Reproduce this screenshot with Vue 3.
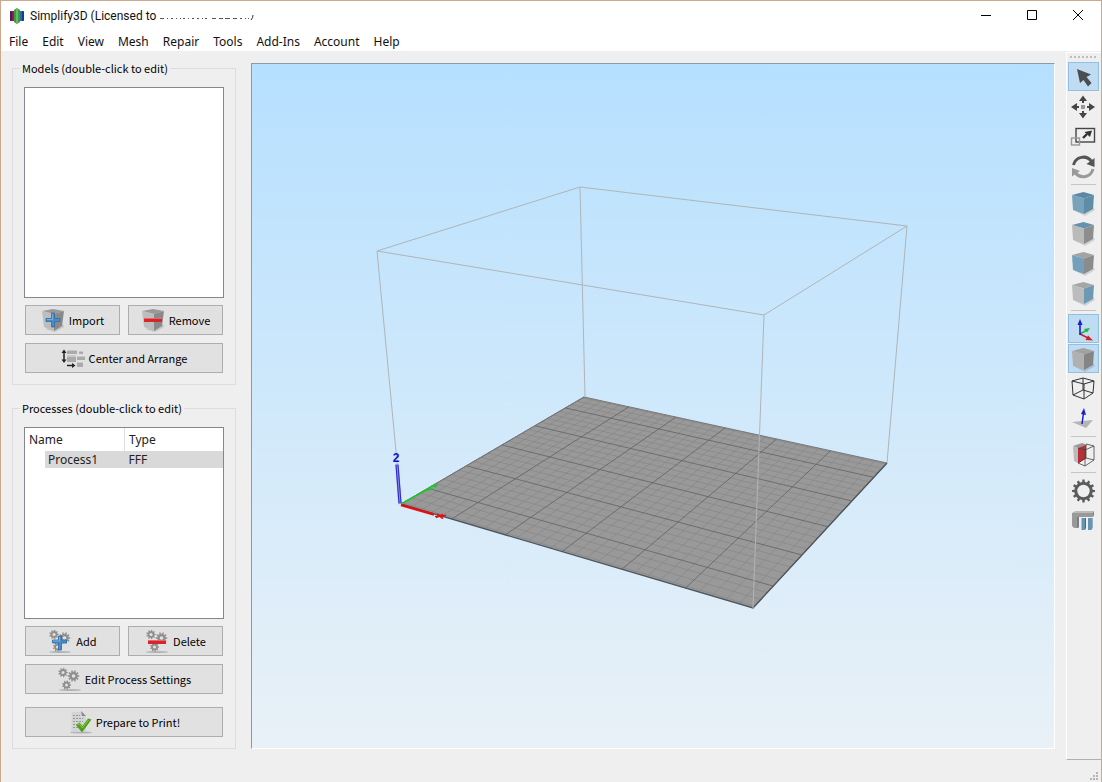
<script setup>
import { ref } from 'vue'

const menus = ['File', 'Edit', 'View', 'Mesh', 'Repair', 'Tools', 'Add-Ins', 'Account', 'Help']

const toolGroups = [
  [
    { id: 'select', label: 'Select', active: true },
    { id: 'move', label: 'Move' },
    { id: 'scale', label: 'Scale' },
    { id: 'rotate', label: 'Rotate' },
  ],
  [
    { id: 'view-default', label: 'Default view', cube: ['#5b89a3', '#78a3bb', '#5f8ca6'] },
    { id: 'view-top', label: 'Top view', cube: ['#6593ae', '#bababa', '#8d8d8d'] },
    { id: 'view-front', label: 'Front view', cube: ['#a3a3a3', '#74a0bb', '#8b8b8b'] },
    { id: 'view-side', label: 'Side view', cube: ['#a6a6a6', '#bcbcbc', '#6c9ab5'] },
  ],
  [
    { id: 'axes', label: 'Show axes', active: true },
    { id: 'solid', label: 'Solid model', active: true, cube: ['#a2a2a2', '#b0b0b0', '#858585'] },
    { id: 'wire', label: 'Wireframe' },
    { id: 'normals', label: 'Show normals' },
  ],
  [{ id: 'section', label: 'Cross section' }],
  [
    { id: 'settings', label: 'Machine settings' },
    { id: 'supports', label: 'Supports' },
  ],
]

const processes = ref([{ name: 'Process1', type: 'FFF' }])

// Outline of a gear wheel with a round hole (use with fill-rule evenodd)
function gear(cx, cy, outer, root, hole, teeth) {
  const pts = []
  const step = (Math.PI * 2) / teeth
  for (let i = 0; i < teeth; i++) {
    const a = i * step
    const shape = [[-0.28, root], [-0.18, outer], [0.18, outer], [0.28, root]]
    for (const [k, r] of shape) {
      pts.push(`${(cx + r * Math.cos(a + k * step)).toFixed(2)} ${(cy + r * Math.sin(a + k * step)).toFixed(2)}`)
    }
  }
  return `M${pts.join('L')}Z M${cx - hole} ${cy}a${hole} ${hole} 0 1 0 ${hole * 2} 0a${hole} ${hole} 0 1 0 ${-hole * 2} 0Z`
}
const smallGears = gear(6, 5.5, 4.8, 3.5, 1.6, 9) + gear(16.5, 9, 5.8, 4.2, 1.8, 10) + gear(9.5, 18, 4.6, 3.4, 1.5, 9)
const bigGear = gear(15.5, 15, 11.5, 9.2, 6.2, 12)

// Perspective mapping of the build plate (unit square) onto its drawn corners
const [p0, p1, p2, p3] = [[401, 504], [753, 608], [887, 463], [584, 397]]
function project(u, v) {
  const d1 = [p1[0] - p2[0], p1[1] - p2[1]]
  const d2 = [p3[0] - p2[0], p3[1] - p2[1]]
  const s = [p0[0] - p1[0] + p2[0] - p3[0], p0[1] - p1[1] + p2[1] - p3[1]]
  const det = d1[0] * d2[1] - d2[0] * d1[1]
  const g = (s[0] * d2[1] - d2[0] * s[1]) / det
  const h = (d1[0] * s[1] - s[0] * d1[1]) / det
  const w = g * u + h * v + 1
  return [0, 1]
    .map((i) => ((p1[i] - p0[i] + g * p1[i]) * u + (p3[i] - p0[i] + h * p3[i]) * v + p0[i]) / w)
    .map((n) => n.toFixed(2))
    .join(' ')
}
const bed = { x: 300, y: 265 }
function gridPath(major) {
  let d = ''
  const wanted = (n) => (n % 50 === 0) === major
  for (let x = -150; x <= 150; x += 10) {
    if (wanted(x)) d += `M${project(x / bed.x + 0.5, 0)}L${project(x / bed.x + 0.5, 1)}`
  }
  for (let y = -130; y <= 130; y += 10) {
    if (wanted(y)) d += `M${project(0, y / bed.y + 0.5)}L${project(1, y / bed.y + 0.5)}`
  }
  return d
}
const minorGrid = gridPath(false)
const majorGrid = gridPath(true)
</script>

<template>
  <div class="window">
    <header class="titlebar">
      <svg class="logo" viewBox="0 0 16 16" aria-hidden="true">
        <rect x="1" y="3" width="5" height="10" rx="1" fill="#8e1c6c" />
        <rect x="1" y="3" width="2" height="10" rx="1" fill="#5b1650" />
        <rect x="10" y="3" width="5" height="10" rx="1" fill="#1b6fb5" />
        <rect x="13" y="3" width="2" height="10" rx="1" fill="#173f7c" />
        <path d="M5 2L8 0L11 2V14L8 16L5 14Z" fill="#3f9a3c" />
        <path d="M7 1h2v14h-2z" fill="#6bb95a" />
      </svg>
      <h1 class="title">Simplify3D (Licensed to</h1>
      <svg class="masked" viewBox="0 0 94 10" aria-hidden="true">
        <path d="M0 7.500h4M7 7.500h1M11 7.500h2M16 7.500h1M20 7.500h1M23 7.500h2M28 7.500h1M32 7.500h2M37 7.500h2M42 7.500h1M45 7.500h2M52 7.500h4M59 7.500h4M65 7.500h5M73 7.500h4M80 7.500h2M85 7.500h1M88 7.500h1" stroke="#555" fill="none" />
        <path d="M93 4Q93 7 91 9" stroke="#333" fill="none" />
      </svg>
      <div class="controls">
        <button type="button" aria-label="Minimize"><svg viewBox="0 0 12 12"><path d="M1 5.500h10" /></svg></button>
        <button type="button" aria-label="Maximize"><svg viewBox="0 0 12 12"><path d="M1.500 .5h9v9h-9z" /></svg></button>
        <button type="button" aria-label="Close"><svg viewBox="0 0 12 12"><path d="M1 0L11 10M11 0L1 10" /></svg></button>
      </div>
    </header>

    <nav class="menubar" aria-label="Main menu">
      <button v-for="m in menus" :key="m" type="button">{{ m }}</button>
    </nav>

    <div class="body">
      <aside class="sidebar">
        <fieldset class="group">
          <legend>Models (double-click to edit)</legend>
          <div class="list models" role="listbox" aria-label="Models" tabindex="0"></div>
          <div class="buttons">
            <button type="button" class="push">
              <svg viewBox="0 0 24 24" aria-hidden="true">
                <path d="M4 21L14 24L23 19L22 16Z" fill="#000" opacity=".12" />
                <path d="M1 3L12 1L23 3L13 6Z" fill="#999" />
                <path d="M1 3L13 6V23L3 19Z" fill="#bdbdbd" />
                <path d="M13 6L23 3L21 18L13 23Z" fill="#8a8a8a" />
                <path d="M10.500 5h3v5.500h5.500v3h-5.500v5.500h-3v-5.500H5v-3h5.500Z" fill="#4a8cc8" stroke="#2d6ba5" stroke-width=".8" />
                <path d="M11.500 6v5.500H6" fill="none" stroke="#77afe0" />
              </svg>
              <span>Import</span>
            </button>
            <button type="button" class="push">
              <svg viewBox="0 0 24 24" aria-hidden="true">
                <path d="M4 21L14 24L23 19L22 16Z" fill="#000" opacity=".12" />
                <path d="M1 3L12 1L23 3L13 6Z" fill="#999" />
                <path d="M1 3L13 6V23L3 19Z" fill="#bdbdbd" />
                <path d="M13 6L23 3L21 18L13 23Z" fill="#8a8a8a" />
                <rect x="3" y="10" width="18" height="4" fill="#d6262b" />
                <path d="M3 10.500h18" stroke="#ef6468" />
              </svg>
              <span>Remove</span>
            </button>
            <button type="button" class="push wide">
              <svg viewBox="0 0 24 24" aria-hidden="true">
                <g fill="#aaa">
                  <rect x="6" y="4" width="10" height="4" />
                  <rect x="18" y="5" width="4" height="3" />
                  <rect x="6" y="9" width="9" height="7" />
                  <rect x="16" y="10" width="8" height="4" />
                  <rect x="16" y="16" width="6" height="5" />
                </g>
                <path d="M6 4h10v1H6zM18 5h4v1h-4zM6 9h9v2H6zM16 10h8v1h-8zM16 16h6v1h-6z" fill="#c9c9c9" />
                <path d="M3 6V14M6 19.500H12" stroke="#222" stroke-width="1.500" />
                <path d="M.5 7L3 3.500L5.500 7ZM.5 13.500L3 17L5.500 13.500ZM11 17L14.500 19.500L11 22Z" fill="#222" />
              </svg>
              <span>Center and Arrange</span>
            </button>
          </div>
        </fieldset>

        <fieldset class="group processes">
          <legend>Processes (double-click to edit)</legend>
          <div class="list">
            <table>
              <thead>
                <tr><th scope="col">Name</th><th scope="col">Type</th></tr>
              </thead>
              <tbody>
                <tr v-for="p in processes" :key="p.name">
                  <td><span class="cell">{{ p.name }}</span></td>
                  <td class="type">{{ p.type }}</td>
                </tr>
              </tbody>
            </table>
          </div>
          <div class="buttons">
            <button type="button" class="push">
              <svg viewBox="0 0 24 24" aria-hidden="true">
                <ellipse cx="12" cy="23" rx="11" ry="1" fill="#000" opacity=".2" />
                <path :d="smallGears" fill="#8f8f8f" fill-rule="evenodd" />
                <path d="M10.500 7h3v4h5v3h-5v7h-3v-7H4.500v-3h6Z" fill="#4a8cc8" stroke="#2d6ba5" stroke-width=".8" />
                <path d="M11.500 8v4H5" fill="none" stroke="#77afe0" />
              </svg>
              <span>Add</span>
            </button>
            <button type="button" class="push">
              <svg viewBox="0 0 24 24" aria-hidden="true">
                <ellipse cx="12" cy="23" rx="11" ry="1" fill="#000" opacity=".2" />
                <path :d="smallGears" fill="#8f8f8f" fill-rule="evenodd" />
                <rect x="3" y="11" width="18" height="4" fill="#d6262b" />
                <path d="M3 11.500h18" stroke="#ef6468" />
              </svg>
              <span>Delete</span>
            </button>
            <button type="button" class="push wide">
              <svg viewBox="0 0 24 24" aria-hidden="true">
                <ellipse cx="13" cy="23" rx="11" ry="1" fill="#000" opacity=".2" />
                <path :d="smallGears" fill="#8f8f8f" fill-rule="evenodd" />
              </svg>
              <span>Edit Process Settings</span>
            </button>
            <button type="button" class="push wide print">
              <svg viewBox="0 0 24 24" aria-hidden="true">
                <ellipse cx="13" cy="22.500" rx="11" ry="1" fill="#000" opacity=".2" />
                <path d="M4 2H14L18 6V21L3 22Z" fill="#d4d4d4" />
                <path d="M13 1L18 6H14Z" fill="#888" />
                <path d="M5 5.500h7M5 8.500h10M5 11.500h10M5 14.500h8M5 17.500h6" stroke="#999" stroke-dasharray="2 1" />
                <path d="M8 15L11.500 12.500L14.500 16L20 8.500L23.500 9.500L14 22.500Z" fill="#4ea01c" />
                <path d="M9.500 15L11.500 14L14.500 18L20.500 10" fill="none" stroke="#83cc3e" />
              </svg>
              <span>Prepare to Print!</span>
            </button>
          </div>
        </fieldset>
      </aside>

      <main class="viewport">
        <svg class="scene" viewBox="252 64 802 684" role="img" aria-label="Build volume">
          <path d="M401 504L753 608L887 463L584 397Z" fill="#999" />
          <path :d="minorGrid" stroke="#808080" stroke-width=".6" fill="none" opacity=".85" />
          <path :d="majorGrid" stroke="#626262" stroke-width=".8" fill="none" />
          <path d="M401 504L584 397L887 463" fill="none" stroke="#777" />
          <path d="M401 504L753 608L887 463" fill="none" stroke="#4f565c" stroke-width="1.400" />
          <path d="M377 251L580 187L907 226L764 315ZM377 251L401 504M580 187L585 397M907 226L887 463M764 315L753 608" fill="none" stroke="#b0b4b6" />
          <path d="M401 504L430 488M427 490l6-1M430 487l8-2M434 484l2 4" stroke="#1fc52c" stroke-width="1.500" fill="none" />
          <path d="M400 504L397 464" stroke="#8c8cf0" stroke-width="3.500" />
          <path d="M399 503L396 465M401 503L398 465" stroke="#2020b8" stroke-width=".9" />
          <text x="396" y="462" class="axis-label">2</text>
          <path d="M401 505L434 514.500" stroke="#e01010" stroke-width="2.500" />
          <path d="M435 516.500L446 515.500M437 514L443 518.500M436 517.500L443 514.500" stroke="#e01010" stroke-width="1.600" />
        </svg>
      </main>

      <div class="toolbar" role="toolbar" aria-label="Tools" aria-orientation="vertical">
        <div class="handle"></div>
        <template v-for="(group, gi) in toolGroups" :key="gi">
          <hr v-if="gi > 0" />
          <button
            v-for="t in group"
            :key="t.id"
            type="button"
            class="tool"
            :class="{ active: t.active }"
            :aria-label="t.label"
          >
            <svg viewBox="1 1 29 27" aria-hidden="true">
              <g v-if="t.cube">
                <path d="M7 23L17 28L27 22L25 18Z" fill="#000" opacity=".12" />
                <path d="M4 7L15.500 4L26 7L16 10.500Z" :fill="t.cube[0]" />
                <path d="M4 7L16 10.500V26L5 22Z" :fill="t.cube[1]" />
                <path d="M16 10.500L26 7L25 21L16 26Z" :fill="t.cube[2]" />
              </g>
              <path v-else-if="t.id === 'select'" d="M9 7L23 12.500L18.500 15L23.500 21L20 24.500L15.500 18L12 21Z" fill="#4b4d50" />
              <g v-else-if="t.id === 'move'">
                <path d="M15 3.500L19 9H11ZM15 26.500L19 21H11ZM3 15L9 11V19ZM27 15L21 11V19Z" fill="#454545" />
                <path d="M15 8v3M15 19v3M8 15h3M19 15h3" stroke="#454545" stroke-width="2" />
                <rect x="13" y="13" width="4" height="4" fill="#999" />
              </g>
              <g v-else-if="t.id === 'scale'" fill="none">
                <rect x="8" y="6.500" width="18.500" height="13.500" stroke="#454545" stroke-width="1.400" />
                <rect x="3.500" y="16" width="8" height="7" stroke="#999" stroke-width="1.400" />
                <path d="M15 16L19 12" stroke="#333" stroke-width="2.400" />
                <path d="M16.500 10L24 8.500L22 15Z" fill="#333" />
              </g>
              <g v-else-if="t.id === 'rotate'" fill="none" stroke-width="3">
                <path d="M5.500 13A10 10 0 0 1 23.500 9.500" stroke="#555" />
                <path d="M26.500 6V15L18.500 12Z" fill="#555" />
                <path d="M25 17A10 10 0 0 1 7.500 21" stroke="#999" />
                <path d="M4 16V24.500L12 19Z" fill="#999" />
              </g>
              <g v-else-if="t.id === 'axes'">
                <path d="M12 20L19 16" stroke="#19b842" stroke-width="1.500" />
                <path d="M22 14L16 15L19 18.500Z" fill="#19b842" />
                <path d="M12 20L20 24" stroke="#d31d25" stroke-width="1.500" />
                <path d="M25 26.500L17.500 26L20 21.500Z" fill="#d31d25" />
                <path d="M12 21V9" stroke="#1b20c9" stroke-width="1.600" />
                <path d="M12 5L14.500 11H9.500Z" fill="#1b20c9" />
              </g>
              <path v-else-if="t.id === 'wire'" d="M4 7L15 4L26 7L16 10ZM4 7L5 21L16 25L25 19L26 7M16 10V25M15 4V16L5 21M15 16L25 19" fill="none" stroke="#333" stroke-width="1" />
              <g v-else-if="t.id === 'normals'">
                <path d="M4 18L25 16L18 24Z" fill="#b5b5b5" />
                <path d="M14 20L15.500 9" stroke="#1b20c9" stroke-width="1.500" />
                <path d="M16 4L18 11L13 10Z" fill="#1b20c9" />
              </g>
              <g v-else-if="t.id === 'section'">
                <path d="M5 6L14 3L20 5L10 8Z" fill="#999" />
                <path d="M5 6L10 8V23L6 21Z" fill="#bbb" />
                <path d="M10 8L18 5V18L10 23Z" fill="#b92f38" />
                <path d="M18 4L26 6L17 10L10 8M17 10V26L26 20V6M18 5V18L26 20M10 23L17 26" fill="none" stroke="#444" stroke-width=".8" />
                <path d="M10 23L18 18" stroke="#8b1820" />
              </g>
              <path v-else-if="t.id === 'settings'" :d="bigGear" fill="#5b5b5b" fill-rule="evenodd" />
              <g v-else>
                <path d="M4 7L7 5H26L25 7Z" fill="#bbb" />
                <path d="M4 7H25V11H11V22H6L4 20Z" fill="#999" />
                <path d="M11 11V20L9 22V11Z" fill="#7d7d7d" />
                <path d="M25 7L26 5V9L25 11Z" fill="#777" />
                <path d="M13.500 12H17V24H13.500ZM20 12H23.500V24H20Z" fill="#6494b2" />
                <path d="M17 12H18V22L17 24ZM23.500 12H24.500V22L23.500 24Z" fill="#416d89" />
              </g>
            </svg>
          </button>
        </template>
      </div>
    </div>

    <footer class="status">
      <svg viewBox="0 0 9 9" aria-hidden="true">
        <path d="M6 0h2v2h-2zM3 3h2v2h-2zM6 3h2v2h-2zM0 6h2v2h-2zM3 6h2v2h-2zM6 6h2v2h-2z" fill="#b4b4b4" />
      </svg>
    </footer>
  </div>
</template>

<style>
body {
  margin: 0;
}
</style>

<style scoped>
.window {
  box-sizing: border-box;
  min-height: 100vh;
  display: flex;
  flex-direction: column;
  border: 1px solid #cda88c;
  background: #efefef;
  color: #111;
  font: 12px/16px "Noto Sans", "Open Sans", sans-serif;
}
button {
  font: inherit;
  color: inherit;
  padding: 0;
  border: 0;
  background: none;
}
svg {
  display: block;
  flex: none;
}
.titlebar {
  display: flex;
  align-items: center;
  height: 30px;
  padding-left: 8px;
  background: #fff;
}
.logo {
  width: 16px;
  height: 16px;
}
.title {
  margin: 0 0 0 5px;
  font: 12px/16px Roboto, "Noto Sans", sans-serif;
  white-space: nowrap;
}
.masked {
  width: 94px;
  height: 10px;
  margin-left: 4px;
}
.controls {
  display: flex;
  height: 100%;
  margin-left: auto;
}
.controls button {
  display: grid;
  place-items: center;
  width: 46px;
}
.controls svg {
  width: 12px;
  height: 12px;
  fill: none;
  stroke: #000;
}
.menubar {
  display: flex;
  gap: 14px;
  height: 18px;
  padding: 2px 8px 0;
  background: #fff;
}
.body {
  flex: 1;
  display: flex;
}
.sidebar {
  display: flex;
  flex-direction: column;
  gap: 16px;
  width: 224px;
  padding: 10px 15px 0 11px;
}
.group {
  box-sizing: border-box;
  display: flex;
  flex-direction: column;
  gap: 7px;
  min-width: 0;
  margin: 0;
  padding: 12px 11px 11px;
  border: 1px solid #dcdcdc;
  font: 11px/14px "Noto Sans CJK JP", sans-serif;
  color: #000;
}
.group legend {
  margin-left: -4px;
  padding: 0 2px;
}
.processes {
  flex: 1;
}
.list {
  box-sizing: border-box;
  border: 1px solid #828790;
  background: #fff;
}
.models {
  height: 211px;
}
.processes .list {
  flex: 1;
}
table {
  width: 100%;
  border-collapse: collapse;
  table-layout: fixed;
  font: 12px/16px "Noto Sans", "Open Sans", sans-serif;
  color: #222;
}
th {
  height: 23px;
  padding: 0 4px;
  text-align: left;
  font-weight: 400;
}
th + th {
  border-left: 1px solid #dedede;
}
th:first-child {
  width: 91px;
}
td {
  height: 17px;
  padding: 0;
}
td.type {
  padding-left: 4px;
  background: #d9d9d9;
}
.cell {
  display: block;
  margin-left: 20px;
  padding-left: 3px;
  background: #d9d9d9;
  line-height: 17px;
}
.buttons {
  display: grid;
  grid-template-columns: 1fr 1fr;
  gap: 8px;
  margin: 0 1px;
}
.push {
  box-sizing: border-box;
  display: flex;
  align-items: center;
  justify-content: center;
  gap: 4px;
  height: 30px;
  border: 1px solid #adadad;
  background: #e1e1e1;
  white-space: nowrap;
}
.push svg {
  width: 24px;
  height: 24px;
}
.wide {
  grid-column: 1 / -1;
}
.print {
  margin-top: 5px;
}
.viewport {
  flex: 1;
  display: flex;
  min-width: 0;
  margin-top: 12px;
  border: 1px solid #fff;
  border-top-color: #8d9aa3;
  border-left-color: #8d9aa3;
  background: linear-gradient(#b6e0ff, #e9f1f7);
}
.scene {
  flex: 1;
  width: 100%;
  min-width: 0;
}
.axis-label {
  font: bold 12px "Liberation Sans", sans-serif;
  fill: #1414c8;
  text-anchor: middle;
}
.toolbar {
  display: flex;
  flex-direction: column;
  align-items: center;
  gap: 1px;
  width: 33px;
  margin: 1px 0 -11px 11px;
  padding-right: 1px;
  border-top: 1px solid #fff;
  border-left: 1px solid #fff;
  border-bottom: 1px solid #b0b0b0;
}
.handle {
  width: 27px;
  height: 2px;
  margin: 3px 0;
  background: repeating-linear-gradient(90deg, #bdbdbd 0 2px, transparent 2px 4px);
}
.tool {
  box-sizing: border-box;
  width: 31px;
  height: 29px;
  border: 1px solid transparent;
}
.tool.active {
  border-color: #90c0e2;
  background: #c0dcf3;
}
.tool svg {
  width: 29px;
  height: 27px;
}
hr {
  width: 25px;
  height: 1px;
  margin: 2px 0;
  border: 0;
  background: #c4c4c4;
}
.status {
  display: flex;
  align-items: flex-end;
  justify-content: flex-end;
  height: 33px;
  padding-right: 2px;
}
.status svg {
  width: 9px;
  height: 9px;
  margin-bottom: 1px;
}
</style>
